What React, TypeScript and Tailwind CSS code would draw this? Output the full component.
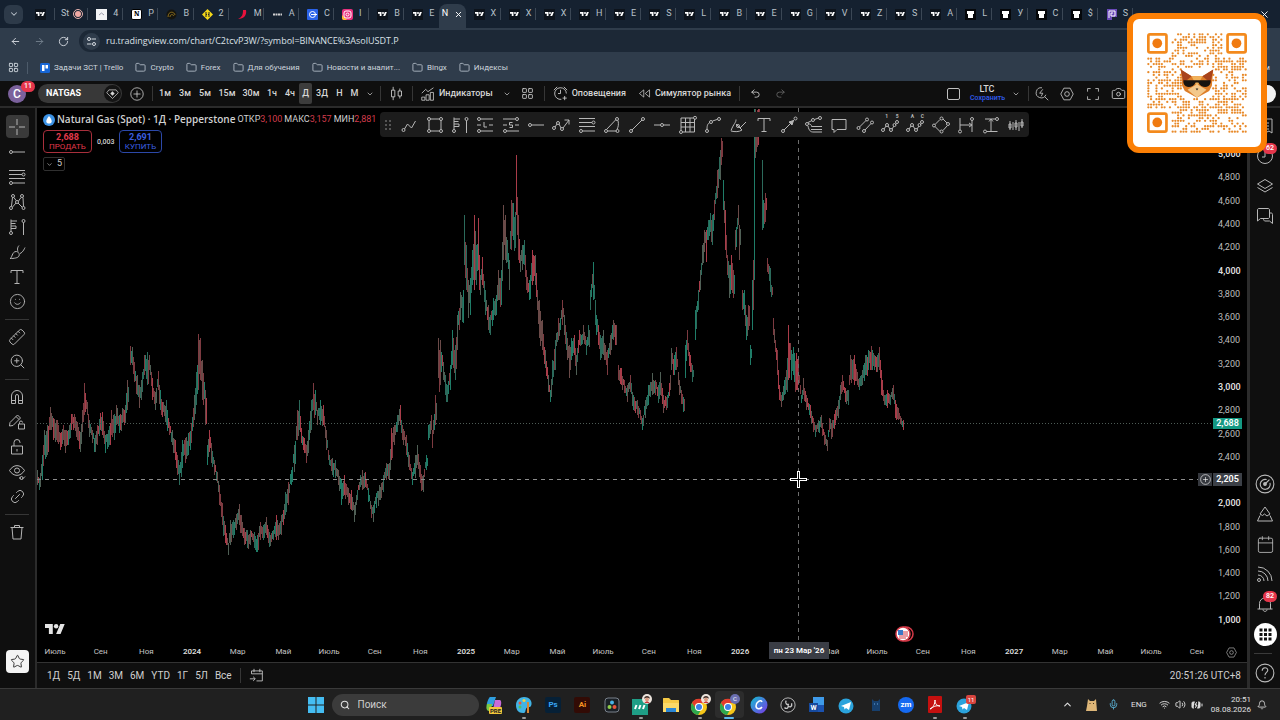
import type { ReactNode } from 'react';
import {
  ArrowLeft, ArrowRight, BatteryCharging, Bell, Calendar, Camera, ChevronDown, ChevronUp,
  Folder, LayoutGrid, Link2, Mic, Redo2, RotateCw, Ruler, Search, Smile, Star,
  Undo2, Volume2, Wifi, X, ZoomIn,
} from 'lucide-react';

/* ---------- chart data: [x, high, low] in canvas pixels ---------- */
const SWINGS: number[][] = [
  [37, 470, 485], [39, 478, 490], [42, 455, 480], [44, 430, 455], [47, 425, 455], [50, 407, 430], [53, 418, 440],
  [57, 420, 442], [60, 433, 450], [63, 425, 440], [65, 430, 453], [68, 430, 445], [71, 414, 430], [74, 414, 428],
  [77, 422, 440], [80, 432, 452], [82, 410, 432], [84, 383, 415], [87, 402, 415], [89, 420, 437], [92, 430, 443],
  [95, 435, 452], [97, 425, 445], [100, 413, 430], [102, 412, 435], [105, 435, 453], [108, 430, 447], [111, 410, 435],
  [114, 414, 440], [116, 405, 425], [119, 415, 433], [122, 408, 423], [125, 405, 423], [127, 380, 410], [130, 346, 365],
  [132, 347, 365], [134, 362, 382], [137, 375, 395], [139, 385, 408], [142, 372, 392], [144, 355, 375], [147, 352, 385],
  [149, 355, 370], [152, 378, 400], [155, 392, 410], [158, 371, 390], [160, 390, 410], [162, 402, 417], [166, 400, 425],
  [169, 422, 435], [172, 430, 445], [175, 440, 460], [177, 455, 475], [179, 465, 485], [182, 440, 468], [185, 438, 463],
  [188, 433, 455], [191, 423, 443], [194, 395, 420], [196, 372, 405], [198, 334, 390], [200, 338, 380], [202, 360, 400],
  [205, 390, 425], [207, 445, 465], [209, 430, 452], [211, 443, 463], [214, 460, 475], [217, 472, 483], [219, 485, 505],
  [222, 503, 525], [225, 525, 543], [228, 543, 555], [230, 520, 545], [233, 520, 538], [236, 514, 530], [239, 504, 525],
  [241, 515, 533], [244, 528, 545], [247, 530, 548], [250, 530, 545], [254, 532, 548], [257, 535, 552], [260, 522, 540],
  [263, 525, 540], [266, 517, 535], [269, 532, 547], [273, 530, 540], [276, 515, 540], [279, 523, 535], [281, 515, 535],
  [283, 510, 525], [285, 492, 515], [288, 482, 505], [291, 470, 485], [294, 445, 472], [297, 410, 440], [299, 400, 430],
  [301, 428, 443], [304, 438, 453], [306, 445, 463], [308, 430, 453], [311, 400, 430], [313, 383, 410], [315, 390, 415],
  [317, 410, 425], [320, 400, 425], [323, 405, 425], [326, 430, 450], [329, 455, 465], [332, 458, 475], [335, 460, 478],
  [338, 470, 485], [341, 480, 505], [344, 475, 495], [348, 488, 505], [351, 490, 510], [354, 505, 522], [357, 490, 500],
  [360, 475, 487], [362, 470, 490], [365, 472, 487], [368, 488, 502], [371, 505, 518], [373, 505, 522], [376, 493, 508],
  [379, 485, 500], [383, 475, 492], [386, 463, 480], [389, 463, 480], [391, 428, 460], [394, 425, 445], [397, 415, 432],
  [400, 405, 425], [402, 425, 440], [406, 435, 455], [409, 455, 470], [412, 472, 485], [415, 455, 478], [417, 445, 465],
  [420, 465, 483], [423, 475, 492], [426, 455, 470], [428, 425, 440], [431, 415, 430], [432, 430, 448], [435, 395, 425],
  [438, 338, 378], [440, 340, 385], [443, 362, 380], [445, 375, 395], [447, 385, 402], [450, 365, 390], [452, 330, 365],
  [455, 345, 380], [457, 315, 350], [460, 292, 320], [463, 290, 323], [464, 215, 265], [466, 245, 290], [468, 280, 318],
  [470, 278, 315], [472, 250, 285], [474, 215, 290], [476, 245, 285], [478, 218, 270], [480, 275, 295], [482, 257, 285],
  [485, 290, 315], [488, 305, 330], [490, 315, 335], [493, 298, 320], [496, 295, 315], [498, 270, 300], [501, 270, 305],
  [503, 205, 260], [505, 215, 260], [507, 240, 262], [509, 260, 290], [511, 200, 250], [513, 203, 240], [515, 212, 248],
  [516, 155, 215], [518, 215, 260], [520, 255, 272], [522, 245, 270], [524, 240, 265], [526, 270, 290], [529, 280, 300],
  [532, 250, 285], [535, 255, 285], [537, 290, 310], [539, 300, 338], [542, 320, 350], [545, 350, 368], [548, 375, 392],
  [550, 390, 402], [552, 360, 385], [555, 340, 370], [558, 318, 340], [560, 318, 330], [562, 300, 325], [564, 315, 335],
  [567, 338, 360], [569, 345, 378], [571, 338, 360], [574, 335, 355], [576, 355, 375], [579, 330, 345], [581, 335, 345],
  [583, 325, 340], [586, 340, 355], [588, 325, 345], [590, 290, 310], [593, 262, 300], [595, 300, 325], [598, 325, 345],
  [600, 335, 360], [603, 330, 355], [605, 345, 360], [607, 350, 375], [610, 335, 355], [613, 320, 340], [615, 325, 345],
  [618, 365, 380], [621, 368, 385], [624, 380, 393], [627, 385, 402], [630, 375, 392], [633, 395, 410], [637, 400, 415],
  [640, 410, 420], [642, 418, 430], [645, 400, 418], [648, 385, 405], [652, 373, 395], [655, 380, 395], [658, 385, 403],
  [660, 372, 395], [663, 395, 413], [667, 395, 408], [670, 375, 390], [671, 348, 370], [674, 355, 375], [676, 347, 370],
  [679, 380, 395], [683, 397, 412], [685, 345, 378], [687, 330, 350], [690, 355, 372], [692, 365, 382], [695, 310, 340],
  [698, 290, 310], [700, 270, 290], [702, 245, 265], [704, 230, 252], [706, 230, 262], [708, 220, 240], [710, 213, 232],
  [712, 215, 245], [714, 200, 220], [717, 170, 198], [720, 150, 180], [721, 138, 165], [723, 180, 210], [725, 210, 250],
  [727, 255, 275], [729, 265, 298], [731, 255, 290], [733, 270, 298], [735, 230, 250], [738, 205, 225], [739, 225, 260],
  [742, 290, 310], [744, 290, 315], [746, 315, 340], [748, 305, 330], [750, 345, 365], [752, 280, 330], [753, 260, 310],
  [754, 109, 280], [755, 109, 158], [758, 109, 145], [762, 160, 230], [763, 200, 228], [765, 193, 222], [767, 258, 272],
  [770, 268, 292], [771, 285, 297], [773, 318, 335], [775, 340, 352], [777, 350, 375], [779, 385, 400], [781, 395, 407],
  [784, 380, 395], [786, 370, 390], [788, 325, 380], [791, 350, 380], [793, 347, 375], [796, 353, 390], [798, 360, 385],
  [801, 395, 403], [803, 378, 395], [806, 395, 410], [810, 405, 418], [813, 418, 432], [815, 425, 437], [818, 420, 432],
  [821, 415, 428], [824, 432, 445], [827, 440, 451], [829, 418, 432], [832, 420, 437], [835, 410, 425], [838, 400, 418],
  [840, 385, 400], [842, 375, 392], [845, 388, 402], [848, 390, 405], [850, 355, 380], [854, 355, 385], [857, 372, 385],
  [859, 378, 390], [862, 370, 385], [865, 355, 375], [868, 350, 370], [871, 346, 370], [874, 355, 370], [877, 355, 372],
  [879, 347, 370], [881, 370, 395], [884, 395, 405], [887, 390, 408], [890, 395, 405], [893, 385, 400], [895, 400, 418],
  [898, 408, 420], [901, 418, 425], [903, 420, 430],
];

function noise(n: number): number {
  const v = Math.sin(n * 12.9898) * 43758.5453;
  return v - Math.floor(v);
}

const UP = ['#1f7d68', '#2b6a5b', '#4f5f55'];
const DOWN = ['#a93c49', '#7d3a40', '#6a4a48'];

const BARS = SWINGS.flatMap(([x, hi, lo], i) => {
  const next = SWINGS[i + 1] ?? [x + 1, hi, lo];
  const steps = Math.max(1, next[0] - x);
  // a jump between two swings is a gap in the series, so no bars lead into it
  const gap = next[1] > lo + 14 || next[2] < hi - 14;
  return Array.from({ length: gap ? Math.min(steps, 2) : steps }, (_, s) => {
    const t = gap ? 0 : s / steps;
    const h = hi + (next[1] - hi) * t;
    const l = lo + (next[2] - lo) * t;
    const seed = x + s;
    const span = l - h;
    const cut = s === 0 ? 0 : span * 0.3;
    const rising = next[1] < hi ? 0.28 : 0.72;
    const up = noise(seed) > rising;
    const shade = Math.floor(noise(seed + 91) * 3);
    return {
      x: seed - 37,
      y: Math.round(h + cut * noise(seed + 7)) - 108,
      h: Math.max(3, Math.round(span - 2 * cut * noise(seed + 3))),
      color: (up ? UP : DOWN)[shade],
    };
  });
});

const PRICES = Array.from({ length: 21 }, (_, i) => 5000 - i * 200);
const MONTHS = ['Июль', 'Сен', 'Ноя', '2024', 'Мар', 'Май', 'Июль', 'Сен', 'Ноя', '2025', 'Мар', 'Май', 'Июль',
  'Сен', 'Ноя', '2026', 'Мар', 'Май', 'Июль', 'Сен', 'Ноя', '2027', 'Мар', 'Май', 'Июль', 'Сен'];

/* ---------- small drawings ---------- */
type Pt = [number, number];

function Glyph({ d, dots = [], size = 18, children }: { d: string; dots?: Pt[]; size?: number; children?: ReactNode }) {
  return (
    <svg width={size} height={size} viewBox="0 0 18 18" fill="none" stroke="currentColor" strokeWidth="1" className="shrink-0">
      <path d={d} />
      {dots.map(([x, y]) => <circle key={`${x}-${y}`} cx={x} cy={y} r="1.5" />)}
      {children}
    </svg>
  );
}

function TvLogo({ className }: { className: string }) {
  return (
    <svg viewBox="0 4 36 18" fill="currentColor" className={className}>
      <path d="M14 22H7V11H0V4h14v18zM28 22h-8l7.500-18h8L28 22z" />
      <circle cx="20" cy="8" r="4" />
    </svg>
  );
}

const Fib = () => <Glyph d="M1 2.500h16M1 6.500h13M1 10.500h16M4.500 15h12.500" dots={[[15.5, 6.5], [3, 15]]} />;
const Ray = () => <Glyph d="M4.500 9h12.500" dots={[[3, 9]]} />;
const TextTool = () => <Glyph d="M3 5V2.500h12V5M9 2.500v13M6.500 15.500h5" />;
const BrushTool = () => <Glyph d="M2 15.500c2 0 2-7 6-7 2 0 4 2 3 4.500-1 2-5 2.500-9 2.500zM10 8.500C8.500 5 11 2.500 11 2.500M12 10.500c3-1 5-6 5-6" />;
const Projection = () => <Glyph d="M3 13.500V1.500M3 3h6M3 5.500h4.500M3 8h5v2.500H3M15.500 4.500V17" dots={[[3, 15], [15.5, 3]]} />;
const Wave = () => <Glyph d="M3 13l2-3M7 10l2 3M11 13l2-3M14 9l1-1" dots={[[2, 14], [6, 9], [10, 14], [13.5, 9], [16, 6]]} />;

const LEFT_TOOLS: { name: string; icon: ReactNode }[][] = [
  [
    { name: 'Курсор', icon: <Glyph d="M9 1v6M9 11v6M1 9h6M11 9h6" /> },
    { name: 'Луч', icon: <Ray /> },
    { name: 'Фибоначчи', icon: <Fib /> },
    { name: 'Паттерны', icon: <Glyph d="M4.500 4.500L3.500 13M6 4.500l2 3M10.500 8L13 4.500M4.500 14l3.500-4M10 10l4 4M15 4.500l.5 9" dots={[[5, 3], [3, 15], [9, 9], [14, 3], [15.5, 15]]} /> },
    { name: 'Прогноз', icon: <Projection /> },
    { name: 'Кисть', icon: <BrushTool /> },
    { name: 'Текст', icon: <TextTool /> },
    { name: 'Значки', icon: <Smile size={17} strokeWidth={1.3} /> },
  ],
  [
    { name: 'Линейка', icon: <Ruler size={18} strokeWidth={1.3} className="-scale-x-100" /> },
    { name: 'Приблизить', icon: <ZoomIn size={17} strokeWidth={1.4} /> },
  ],
  [
    { name: 'Магнит', icon: <Glyph d="M3.500 15.500V8a5.500 5.500 0 0 1 11 0v7.500h-4V8a1.500 1.500 0 0 0-3 0v7.500zM3.500 12.500h4M10.500 12.500h4" /> },
    { name: 'Режим рисования', icon: <Glyph d="M2 9.500L9.500 2l3 3L5 12.500l-3.500.5zM8 3.500l3 3M10.500 11h6v5h-6zM11.500 11V9.500a1.500 1.500 0 0 1 3 0" /> },
    { name: 'Блокировка', icon: <Glyph d="M3.500 8h11v8h-11zM6 8V4.500a3 3 0 0 1 6 0V5M9 11v2.500" /> },
    { name: 'Скрыть', icon: <Glyph d="M1.500 7.500c4-6.500 11-6.500 15 0-4 6.500-11 6.500-15 0zM11 15h2M14 16.500l3-3"><circle cx="9" cy="7.500" r="2.500" /><circle cx="13.500" cy="15" r="1.500" /></Glyph> },
    { name: 'Связать', icon: <Link2 size={17} strokeWidth={1.3} className="-rotate-45" /> },
  ],
  [{ name: 'Удалить', icon: <Glyph d="M2.500 4.500h13M6.500 4.500V2.500h5v2M4 4.500l1 11.500h8l1-11.500" /> }],
];

const FAVORITES: { name: string; icon: ReactNode }[] = [
  { name: 'Ломаная', icon: <Glyph d="M3.500 13l3-5 4 4 4-7" dots={[[2.5, 14]]} /> },
  { name: 'Прямоугольник', icon: <Glyph d="M3 4.500v9M15 4.500v9M4.500 3h9M4.500 15h9" dots={[[3, 3], [15, 3], [3, 15], [15, 15]]} /> },
  { name: 'Профиль объёма', icon: <Projection /> },
  { name: 'Длинная позиция', icon: <Glyph d="M4.500 3h12.500M1 9h4M13 9h4M4.500 15h12.500M8 6v5h3" dots={[[3, 3], [3, 15]]} /> },
  { name: 'Короткая позиция', icon: <Glyph d="M1 3h12.500M1 9h4M13 9h4M4.500 15h12.500M10.500 6.500h-3V9h3v2.500h-3" dots={[[15, 3], [3, 15]]} /> },
  { name: 'Горизонтальный луч', icon: <Ray /> },
  { name: 'Путь', icon: <Glyph d="M3 11l2-3M7 8l2 4M11 12l6-8M12.500 4H17v4.500" dots={[[2, 12], [6, 7], [10, 13]]} /> },
  { name: 'Коррекция', icon: <Fib /> },
  { name: 'Дуга', icon: <Glyph d="M3.500 13.500L13 3.500M4.500 15h9M15 4.500c1 4 0 7-1 9" dots={[[3, 15], [14, 3], [14.5, 15]]} /> },
  { name: 'Линия тренда', icon: <Glyph d="M4 14L14 4" dots={[[3, 15], [15, 3]]} /> },
  { name: 'Горизонтальная линия', icon: <Glyph d="M1 9h6.500M10.500 9h6.500" dots={[[9, 9]]} /> },
  { name: 'Сетка', icon: <Glyph d="M2 2h12.500M15.500 3v13H3.500M2 2v12.500M6.500 2v14M11 2v14M2 6.500h13.500M2 11h13.500" dots={[[16, 1.8], [2, 16]]} /> },
  { name: 'Кривая', icon: <Glyph d="M3 13.500c0-5 1-6 3-7M8.500 5L13 3.500" dots={[[3, 15], [7, 6], [15, 3]]} /> },
  { name: 'Кисть', icon: <Glyph d="M2 14.500C5 7 7 7 7 3.500M7 8l6 6c-3 2-7 2-11 1M17 6l-6 6" dots={[[9, 10]]} /> },
  { name: 'Текст', icon: <TextTool /> },
  { name: 'Стрелка', icon: <Glyph d="M4 14L14 4" dots={[[3, 15], [15.5, 2.5]]}><path d="M13.500 4.500L9 6l3 3z" fill="currentColor" /></Glyph> },
  { name: 'Веер', icon: <Glyph d="M3 6.500l4-2M9.500 3.500L13.500 2M3.500 7.500c2 1 3 1 3 3h10.500M6 13.500h11M3 10c1 5 3 6 5 6h9" dots={[[2, 8], [8, 4], [15, 2]]} /> },
  { name: 'Заметка', icon: <Glyph d="M2 3.500h14v10H7l-3 3v-3H2z" /> },
  { name: 'Канал', icon: <Glyph d="M3.500 11L10 4.500M9 14l6-6.500" dots={[[2.5, 12], [11, 3.5], [8, 15], [16, 6.5]]} /> },
  { name: 'Волны 12345', icon: <Wave /> },
  { name: 'Волны ABC', icon: <Wave /> },
  { name: 'Повёрнутый прямоугольник', icon: <Glyph d="M3 8.500l5-5M11 3l4 4M15 10l-4 4.500M8 15.500l-5-5" dots={[[9.5, 2.5], [16, 8], [9.5, 15.5], [2, 9.5]]} /> },
  { name: 'Диапазон дат', icon: <Glyph d="M3 2v12M15 4.500V16M3 9h12M12 7l3 2-3 2" dots={[[3, 15.5], [15, 3]]} /> },
  { name: 'Диапазон цен', icon: <Glyph d="M3 3h10.500M4.500 15.500h11M9 3v12M7 5.500L9 3l2 2.500" dots={[[15, 3], [3, 15.5]]} /> },
  { name: 'Бары', icon: <Glyph d="M3 5v9M6 6v8M9 4v10M12 6v9M15 3v9M2 8h2v4H2zM8 7h2v4H8zM14 6h2v4h-2z" /> },
];

const TABS: [string, string][] = [
  ['white', '4'], ['notion', 'P'], ['gold', 'В'], ['bnb', '2'], ['chili', 'М'], ['dots', 'А'], ['blue', 'С'], ['insta', 'I'],
  ['tv', 'В'], ['tv', 'Е'], ['active', 'N'], ['tv', 'X'], ['tv', 'X'], ['tv', 'X'], ['tv', 'H'], ['tv', 'E'], ['tv', 'S'],
  ['tv', 'L'], ['tv', 'B'], ['tv', 'E'], ['tv', 'G'], ['tv', 'V'], ['tv', 'Z'], ['tv', 'S'], ['tv', 'A'], ['shirt', 'L'],
  ['shirt', 'У'], ['shirt', 'С'], ['shirt', '$'], ['purple', 'S'],
];

function Favicon({ kind }: { kind: string }) {
  switch (kind) {
    case 'tv':
      return <span className="flex size-[11px] items-center justify-center bg-[#0d131b] text-white"><TvLogo className="w-[9px]" /></span>;
    case 'white':
      return <svg className="size-[11px]" viewBox="0 0 11 11"><path d="M0 0h11v11H0z" fill="#f2f4f6" /><path d="M3 6l2.500-2L8 6" stroke="#99a" fill="none" /></svg>;
    case 'notion':
      return <span className="flex size-[11px] items-center justify-center rounded-xs border border-black bg-white font-serif text-[8px] font-bold text-black">N</span>;
    case 'gold':
      return <svg className="size-[11px]" viewBox="0 0 11 11"><circle cx="5.500" cy="5.500" r="5" fill="#14140f" /><path d="M2 8c0-6 6-6 7-2M4 8c0-3 3-3 4-1" stroke="#8a6d1d" fill="none" /></svg>;
    case 'bnb':
      return <svg className="size-[11px]" viewBox="0 0 11 11"><path d="M5.500 0L11 5.500 5.500 11 0 5.500z" fill="#f4d818" /><path d="M4 3v5M4 5.500h1M7 3v5M6 5.500h1" stroke="#222" /></svg>;
    case 'chili':
      return <svg className="size-[11px]" viewBox="0 0 11 11"><path d="M6 1h3c1 5-2 9-8 9 4-2 5-4 5-9z" fill="#e8123c" /></svg>;
    case 'dots':
      return <svg className="size-[11px]" viewBox="0 0 11 11"><path d="M1 5.500h9" stroke="#d0d0d0" strokeWidth="2" strokeDasharray="2 .5" /></svg>;
    case 'blue':
      return <svg className="size-[11px]" viewBox="0 0 11 11"><rect width="11" height="11" rx="1" fill="#2a62e8" /><circle cx="5.500" cy="5.500" r="3" stroke="#fff" fill="none" /><path d="M4 5.500h6" stroke="#fff" /></svg>;
    case 'insta':
      return <svg className="size-[11px]" viewBox="0 0 11 11"><rect width="11" height="11" rx="2" fill="#e8307e" /><path d="M0 6l5 5H2a2 2 0 0 1-2-2z" fill="#fb3" /><rect x="2" y="2" width="7" height="7" rx="2" stroke="#fff" fill="none" /><circle cx="5.500" cy="5.500" r="1.500" stroke="#fff" fill="none" /></svg>;
    case 'shirt':
      return <svg className="size-[11px]" viewBox="0 0 11 11"><path d="M0 0h11v11H0z" fill="#05070a" /><path d="M2 2h7v3L8 5v4H3V5L2 5z" fill="#fff" /></svg>;
    default:
      return <svg className="size-[11px]" viewBox="0 0 11 11"><path d="M1 0h10v8H6v3H1z" fill="#6a4ab8" /><path d="M3 9V2h6v5H5V4h2" stroke="#fff" fill="none" /></svg>;
  }
}

function BrowserTabs() {
  return (
    <div className="flex h-7 items-center bg-[#152130] text-[9px] text-[#b9c1ca]">
      <button aria-label="Поиск вкладок" className="ml-1 flex size-[19px] shrink-0 items-center justify-center rounded-md bg-[#2d3a49]"><ChevronDown size={10} strokeWidth={2.5} /></button>
      <div className="flex h-3 w-8 shrink-0 items-center border-r border-[#3b4755] pl-3"><Favicon kind="tv" /></div>
      <div className="flex h-3 min-w-0 flex-1 items-center gap-1 border-r border-[#3b4755] pl-1.5">
        <span className="w-2">St</span>
        <span className="flex size-[10px] shrink-0 items-center justify-center rounded-full border border-[#e8b4b0]"><span className="size-1.5 rounded-full bg-[#f0a9a4]" /></span>
      </div>
      {TABS.map(([kind, label], i) => kind === 'active' ? (
        <div key={i} className="flex h-full min-w-0 flex-1 items-end">
          <div className="flex h-6 flex-1 items-center justify-center gap-1.5 rounded-t-lg bg-[#2f3c4b] pb-1 text-white">
            <span>{label}</span><X size={9} strokeWidth={2.5} />
          </div>
        </div>
      ) : (
        <div key={i} className={`flex h-3 min-w-0 flex-1 items-center gap-1.5 border-r pl-2 ${TABS[i + 1]?.[0] === 'active' ? 'border-transparent' : 'border-[#3b4755]'}`}>
          <Favicon kind={kind} />
          <span>{label}</span>
        </div>
      ))}
      <div className="flex w-[147px] shrink-0 items-center justify-end pr-2.5 text-white"><X size={11} /></div>
    </div>
  );
}

function Bookmark({ children }: { children: string }) {
  return (
    <a href="#" className="flex shrink-0 items-center gap-1">
      <Folder size={11} strokeWidth={2} className="text-[#aeb8c3]" />
      {children}
    </a>
  );
}

function BrowserBars() {
  return (
    <>
      <div className="flex h-[26px] items-center bg-[#2f3c4b] text-[#d5dae0]">
        <div className="flex w-[79px] justify-between px-2.5">
          <button aria-label="Назад"><ArrowLeft size={11} /></button>
          <button aria-label="Вперёд" className="text-[#73808d]"><ArrowRight size={11} /></button>
          <button aria-label="Обновить"><RotateCw size={11} /></button>
        </div>
        <div className="mr-24 flex h-[22px] flex-1 items-center gap-1.5 rounded-full bg-[#1c2836] pl-1">
          <button aria-label="Сведения о сайте" className="flex size-[17px] items-center justify-center rounded-full bg-[#2f3c4b]">
            <svg width="9" height="9" viewBox="0 0 9 9" fill="none" stroke="currentColor"><circle cx="2" cy="2" r="1.500" /><circle cx="7" cy="7" r="1.500" /><path d="M4.500 2H9M0 7h4.500" /></svg>
          </button>
          <input aria-label="Адрес" defaultValue="ru.tradingview.com/chart/C2tcvP3W/?symbol=BINANCE%3AsolUSDT.P" className="flex-1 bg-transparent font-['Open_Sans',sans-serif] text-[9px] text-[#dbe0e6] outline-none" />
        </div>
      </div>
      <div className="flex h-[27px] items-center gap-3 bg-[#2f3c4b] pl-2 pr-2.5 text-[8px] text-[#cdd4db]">
        <div className="flex items-center gap-2">
          <LayoutGrid size={11} />
          <span className="h-3 w-px bg-[#4d5b6a]" />
        </div>
        <a href="#" className="flex items-center gap-1">
          <svg width="10" height="10" viewBox="0 0 10 10"><rect width="10" height="10" rx="1.500" fill="#1766d6" /><path d="M2 2h2.500v6H2zM5.500 2H8v3.500H5.500z" fill="#fff" /></svg>
          Задачи ЗСТ | Trello
        </a>
        <Bookmark>Crypto</Bookmark>
        <Bookmark>Forex</Bookmark>
        <Bookmark>Для обучения</Bookmark>
        <Bookmark>Новости и аналит...</Bookmark>
        <Bookmark>Bingx</Bookmark>
        <Bookmark>Индексы</Bookmark>
        <span className="ml-auto">м</span>
      </div>
    </>
  );
}

const Divider = () => <span className="h-[15px] w-px shrink-0 bg-[#363636]" />;

function ChartHeader() {
  return (
    <header className="flex h-[27px] shrink-0 items-center border-b-2 border-[#2b2b2b] bg-[#0f0f0f] text-[9px] font-medium text-[#d6d6d6]">
      <div className="relative ml-2 flex size-[18px] shrink-0 items-center justify-center rounded-full bg-[#7b619c] text-[12px] text-white">
        С
        <span className="absolute -top-1 left-[13px] flex h-[11px] items-center rounded-full bg-[#e5364b] px-[3px] text-[7px] leading-none">11</span>
      </div>
      <div className="ml-3 flex h-[19px] w-[84px] shrink-0 items-center justify-between rounded-full bg-[#383838] pl-2 pr-px">
        <span className="font-bold text-white">NATGAS</span>
        <button aria-label="Детали" className="flex size-[17px] items-center justify-center rounded-full bg-[#141414]">
          <Glyph size={13} d="M4 4h10l3 4-8 8-8-8z"><path d="M9 6l3 3-3 3-3-3z" fill="currentColor" stroke="none" /></Glyph>
        </button>
      </div>
      <button aria-label="Сравнить" className="mx-2 flex shrink-0"><Glyph size={14} d="M9 4.500v9M4.500 9h9"><circle cx="9" cy="9" r="8" /></Glyph></button>
      <Divider />
      <div className="ml-0.5 flex shrink-0 items-center">
        {['1м', '3м', '5м'].map((t) => <button key={t} className="w-5">{t}</button>)}
        {['15м', '30м'].map((t) => <button key={t} className="w-6">{t}</button>)}
        {['1ч', '4ч'].map((t) => <button key={t} className="w-[18px]">{t}</button>)}
        <button className="h-[21px] w-[13px] rounded-xs bg-[#3c3c3c]">Д</button>
        <button className="w-5">3Д</button>
        {['Н', 'М'].map((t) => <button key={t} className="w-[15px]">{t}</button>)}
      </div>
      <button aria-label="Интервалы" className="ml-1 mr-1.5 shrink-0"><ChevronDown size={8} /></button>
      <Divider />
      <button aria-label="Свечи" className="mx-2 flex shrink-0"><Glyph size={15} d="M3 5h4v8H3zM5 1v4M5 13v4M11 6h4v6h-4zM13 3v3M13 12v3" /></button>
      <Divider />
      <button className="ml-2 flex shrink-0 items-center gap-1">
        <Glyph size={14} d="M1 8l5-5 3 3 7-5M1 17v-4h4v4zM6.500 17v-7h4v7zM12 17V7h4v10z" />
        Индикаторы
      </button>
      <button aria-label="Шаблоны" className="ml-2.5 shrink-0"><ChevronDown size={8} /></button>
      <button aria-label="Макеты" className="mx-2.5 flex shrink-0"><LayoutGrid size={13} strokeWidth={1.5} /></button>
      <Divider />
      <button className="ml-2 flex shrink-0 items-center gap-1">
        <Glyph size={15} d="M9 4.500V9H6M1 5l4-4M13 1l4 4M14 12v5M11.500 14.500h5"><path d="M10 16A7 7 0 1 1 16 9" /></Glyph>
        Оповещения
      </button>
      <button className="ml-3 flex shrink-0 items-center gap-1">
        <Glyph size={13} d="M8 4L2 9l6 5zM16 4l-6 5 6 5z" />
        Симулятор рынка
      </button>
      <span className="ml-2 flex shrink-0"><Divider /></span>
      <button aria-label="Отменить" className="ml-2.5 shrink-0"><Undo2 size={11} strokeWidth={1.8} /></button>
      <button aria-label="Повторить" className="ml-3.5 shrink-0 text-[#6a6a6a]"><Redo2 size={11} strokeWidth={1.8} /></button>
      <div className="ml-auto flex shrink-0 items-center">
        <span className="h-3 w-[13px] shrink-0 rounded-xs border border-[#c0c0c0]" />
        <button className="ml-2.5 w-[34px] text-center leading-[9px]">
          LTC
          <span className="block text-[7px] leading-[8px] text-[#2f5cf0]">Сохранить</span>
        </button>
        <button aria-label="Сохранения" className="mx-2"><ChevronDown size={8} /></button>
        <Divider />
        <div className="flex w-[103px] justify-around">
          <button aria-label="Быстрый поиск"><Glyph size={14} d="M9 1a6.500 6.500 0 1 0 5 9M12.500 12.500L17 17M10 3L6 8h4l-2 4" /></button>
          <button aria-label="Настройки"><Glyph size={14} d="M5 1.500h8L17 9l-4 7.500H5L1 9z"><circle cx="9" cy="9" r="3" /></Glyph></button>
          <button aria-label="Во весь экран"><Glyph size={14} d="M2 6V2h4M12 2h4v4M16 12v4h-4M6 16H2v-4" /></button>
          <button aria-label="Снимок"><Camera size={15} strokeWidth={1.3} /></button>
        </div>
        <button className="ml-[126px] mr-1 size-[18px] rounded-full bg-[#f1f1f1]" aria-label="Опубликовать" />
      </div>
    </header>
  );
}

function LeftTools() {
  return (
    <aside className="flex w-[37px] shrink-0 flex-col border-r-2 border-[#2b2b2b] bg-[#0f0f0f] pr-px pt-[6px] text-[#b4b4b4]">
      {LEFT_TOOLS.map((group, g) => (
        <div key={g}>
          {g > 0 && <div className="flex h-[10px] items-center px-[5px]"><span className="h-px flex-1 bg-[#363636]" /></div>}
          {group.map((tool, i) => (
            <div key={tool.name} className="flex h-[25px] items-center justify-center">
              <button aria-label={tool.name} className={`flex size-[23px] items-center justify-center rounded-sm ${g === 0 && i === 0 ? 'bg-[#3a3a3a]' : ''}`}>{tool.icon}</button>
            </div>
          ))}
        </div>
      ))}
      <button aria-label="Избранное" className="mb-[15px] ml-1.5 mt-auto flex size-[23px] items-center justify-center rounded-sm bg-[#f4f4f4] text-[#222]"><Star size={15} strokeWidth={1.4} /></button>
    </aside>
  );
}

function PlotCanvas() {
  return (
    <svg viewBox="0 0 1178 534" preserveAspectRatio="none" className="block size-full" shapeRendering="crispEdges">
      {BARS.map((b) => <rect key={`${b.x}-${b.y}`} x={b.x} y={b.y} width="1" height={b.h} fill={b.color} />)}
      {/* last price, then the cursor lines */}
      <path d="M0 315.500h1178" stroke="#4d5b55" strokeDasharray="1 2" />
      <path d="M0 371.500h1162" stroke="#8c8c8c" strokeDasharray="4 4" />
      <path d="M761.500 0v534" stroke="#6e6e6e" strokeDasharray="4 4" />
      <path d="M760.500 363.500h2v7h7v2h-7v7h-2v-7h-7v-2h7z" fill="#000" stroke="#fff" />
    </svg>
  );
}

function Legend() {
  return (
    <div className="absolute left-1.5 top-[5px] text-[9px] text-[#d0d0d0]">
      <div className="flex h-[13px] items-center whitespace-nowrap">
        <svg width="12" height="12" viewBox="0 0 12 12" className="shrink-0"><circle cx="6" cy="6" r="6" fill="#3c93e6" /><path d="M6 2c5 6 2 7.500 0 7.500S1 8 6 2z" fill="#fff" /></svg>
        <span className="ml-0.5 font-['Open_Sans',sans-serif] text-[10px] font-semibold">Natural Gas (Spot) · 1Д · Pepperstone</span>
        <span className="ml-0.5">ОТКР<span className="text-[#d23c4c]">3,100</span></span>
        <span className="ml-0.5">МАКС<span className="text-[#d23c4c]">3,157</span></span>
        <span className="ml-0.5">МИН<span className="text-[#d23c4c]">2,881</span></span>
      </div>
      <div className="mt-1 flex items-center gap-[5px] text-center text-[8px] leading-[10px]">
        <button className="h-[23px] w-[49px] rounded-sm border border-[#a82f3c] text-[#e0394b]"><b className="block text-[9px] leading-[10px]">2,688</b>ПРОДАТЬ</button>
        <span className="w-[17px] text-[7px] font-medium">0,003</span>
        <button className="h-[23px] w-[43px] rounded-sm border border-[#2c48a8] text-[#3a5fe0]"><b className="block text-[9px] leading-[10px]">2,691</b>КУПИТЬ</button>
      </div>
      <button className="mt-1 flex h-[14px] w-[22px] items-center justify-center gap-1 rounded-xs border border-[#303030]"><ChevronDown size={7} />5</button>
    </div>
  );
}

function ChartArea() {
  return (
    <main className="relative flex min-w-0 flex-1 flex-col bg-black">
      <div className="flex min-h-0 flex-1">
        <div className="relative min-w-0 flex-1">
          <div className="absolute inset-0"><PlotCanvas /></div>
          <Legend />
          <TvLogo className="absolute bottom-2 left-2 w-5 text-[#e4e4e4]" />
          <svg width="20" height="16" viewBox="0 0 20 16" className="absolute bottom-0 left-[858px]">
            <circle cx="11" cy="8" r="7" fill="none" stroke="#d63a48" strokeWidth="1.500" />
            <circle cx="8" cy="8" r="7" fill="#fff" stroke="#d63a48" strokeWidth="1.500" />
            <path d="M4 10h9M4 12h7M8 6h5M8 8h5" stroke="#d63a48" />
            <path d="M3 4h5v5H3z" fill="#3a78c8" />
          </svg>
        </div>
        <div className="flex w-8 shrink-0 flex-col pb-2.5 pl-[3px] pt-[35px] text-[9px] text-[#bdbdbd]">
          {PRICES.map((p) => (
            <span key={p} className={`flex flex-1 items-center leading-none ${p % 1000 === 0 ? 'font-semibold text-[#dcdcdc]' : ''}`}>
              {`${Math.floor(p / 1000)},${String(p % 1000).padStart(3, '0')}`}
            </span>
          ))}
        </div>
      </div>
      {/* price tags */}
      <div className="absolute right-[5px] top-[310px] flex h-[11px] w-[29px] items-center justify-center bg-[#149983] text-[9px] font-semibold text-white">2,688</div>
      <div className="absolute right-[5px] top-[365px] flex h-[13px] text-[9px] font-semibold text-white">
        <button aria-label="Добавить" className="flex w-[14px] items-center justify-center bg-[#35383e]"><Glyph size={11} d="M9 5v8M5 9h8"><circle cx="9" cy="9" r="8" /></Glyph></button>
        <span className="ml-px flex w-[29px] items-center justify-center bg-[#3c4047]">2,205</span>
      </div>
      <div className="relative flex h-[21px] shrink-0 items-center border-b border-[#333] text-[8px] text-[#c4c4c4]">
        <div className="flex min-w-0 flex-1 justify-between">
          {MONTHS.map((m, i) => <span key={i} className={`w-9 text-center ${m.startsWith('20') ? 'font-semibold text-[#dcdcdc]' : ''}`}>{m}</span>)}
        </div>
        <button aria-label="Настройки шкалы" className="flex w-8 justify-center"><Glyph size={11} d="M5 1.500h8L17 9l-4 7.500H5L1 9z"><circle cx="9" cy="9" r="3" /></Glyph></button>
        <span className="absolute left-[732px] top-0 flex h-[17px] w-[60px] items-center justify-center bg-[#3a3d45] font-semibold text-white">пн 23 Мар '26</span>
      </div>
      <div className="flex h-[25px] shrink-0 items-center gap-2 bg-[#0f0f0f] pl-2.5 pr-1.5 text-[10px] text-[#d0d0d0]">
        <div className="flex gap-[7px]">
          {['1Д', '5Д', '1М', '3М', '6М', 'YTD', '1Г', '5Л', 'Все'].map((r) => <button key={r}>{r}</button>)}
        </div>
        <Divider />
        <button aria-label="Перейти к дате"><Glyph size={15} d="M3 7V3.500h13v12H9M3 7h13M6 1v4M13 1v4M1 13h6M5 10.500L7.500 13 5 15.500" /></button>
        <span className="ml-auto">20:51:26 UTC+8</span>
      </div>
      {/* favourite tools */}
      <div className="absolute left-[343px] right-[218px] top-1 flex h-[25px] items-center rounded-sm bg-[#1c1c1c] text-[#b8b8b8]">
        <svg width="17" height="10" viewBox="0 0 17 10" fill="#555" className="shrink-0"><path d="M5 0h2v2H5zM9 0h2v2H9zM5 4h2v2H5zM9 4h2v2H9zM5 8h2v2H5zM9 8h2v2H9z" /></svg>
        {FAVORITES.map((f) => (
          <button key={f.name} aria-label={f.name} className="relative flex min-w-0 flex-1 justify-center">
            {f.icon}
            {f.name.startsWith('Волны') && <span className="absolute -top-0.5 left-2 text-[5px] font-bold leading-none">{f.name.endsWith('ABC') ? 'A' : '1'}</span>}
            {f.name.startsWith('Волны') && <span className="absolute -top-0.5 right-1 text-[5px] font-bold leading-none">{f.name.endsWith('ABC') ? 'C' : '5'}</span>}
          </button>
        ))}
      </div>
    </main>
  );
}

function SideButton({ name, badge, children }: { name: string; badge?: string; children: ReactNode }) {
  return (
    <button aria-label={name} className="relative flex h-[30px] w-full shrink-0 items-center justify-center">
      {children}
      {badge && <span className="absolute left-[13px] top-0.5 flex h-[11px] items-center rounded-full bg-[#e5364b] px-[3px] text-[7px] font-semibold leading-none text-white">{badge}</span>}
    </button>
  );
}

function RightTools() {
  return (
    <aside className="flex w-[33px] shrink-0 flex-col border-l-[3px] border-[#2b2b2b] bg-[#0f0f0f] pt-[3px] text-[#b8b8b8]">
      <SideButton name="Список котировок"><Glyph d="M2 2h14v14l-3-2-4 2-4-2-3 2zM5 6h8M5 9h8M5 12h8" /></SideButton>
      <SideButton name="Оповещения" badge="62"><Glyph d="M9 4v6H6"><circle cx="9" cy="9" r="7.500" /></Glyph></SideButton>
      <SideButton name="Слои"><Glyph d="M9 2.500l7.500 4.500L9 11.500 1.500 7zM1.500 10.500L9 15l7.500-4.500" /></SideButton>
      <SideButton name="Чаты"><Glyph d="M3 1.500h9c1 0 1.500.5 1.500 1.500v7c0 1-.5 1.500-1.500 1.500H4.500L1.500 14V3c0-1 .5-1.500 1.500-1.500zM13.500 6H15c1 0 1.500.5 1.500 1.500v9l-3-2.500H9c-1 0-1.500-1-1.500-2.500" /></SideButton>
      <span className="flex-1" />
      <SideButton name="Скринеры"><Glyph size={20} d="M9 9l4-4"><circle cx="9" cy="9" r="8" /><path d="M13.500 8a4.500 4.500 0 1 1-3-3" /><circle cx="9" cy="9" r="1.200" fill="currentColor" /></Glyph></SideButton>
      <SideButton name="Идеи"><Glyph d="M9 2l5 7-3 2-2.500-2-2 1.500L4 9zM4 10.500L1.500 16h15L14 10.500" /></SideButton>
      <SideButton name="Календарь"><Calendar size={19} strokeWidth={1.1} /></SideButton>
      <SideButton name="Новости"><Glyph d="M2 2a14 14 0 0 1 14 14M2 6a10 10 0 0 1 10 10M2 10a6 6 0 0 1 6 6" dots={[[3, 15]]} /></SideButton>
      <SideButton name="Уведомления" badge="82"><Glyph d="M3.500 14V8.500a5.500 5.500 0 0 1 11 0V14M1.500 14h15M7 14.500c0 2.500 4 2.500 4 0" /></SideButton>
      <SideButton name="Приложения">
        <svg width="23" height="23" viewBox="0 0 23 23"><circle cx="11.500" cy="11.500" r="11.500" fill="#fff" /><path d="M7 5.500v12M11.500 5.500v12M16 5.500v12" stroke="#111" strokeWidth="3" strokeDasharray="3 1.500" /></svg>
      </SideButton>
      <span className="my-1 ml-1 mr-2 h-px shrink-0 bg-[#3a3a3a]" />
      <SideButton name="Помощь"><Glyph size={20} d="M6.500 7c0-3.500 5-3.500 5-.5 0 2-2.500 2-2.500 4.500M9 12.500V14"><circle cx="9" cy="9" r="8" /></Glyph></SideButton>
    </aside>
  );
}

/* ---------- taskbar ---------- */
function Chrome({ badge }: { badge: ReactNode }) {
  return (
    <svg width="22" height="22" viewBox="0 0 22 22">
      <circle cx="10" cy="13" r="8" fill="#f5c518" />
      <path d="M3 9a8 8 0 0 1 14 0h-7a4 4 0 0 0-4 5z" fill="#e33b2e" />
      <path d="M3 9l4 6c1 2 3 2 5 1l-3 5A8 8 0 0 1 3 9z" fill="#2da94f" />
      <circle cx="10" cy="13" r="4" fill="#fff" /><circle cx="10" cy="13" r="3" fill="#3d7fe8" />
      {badge}
    </svg>
  );
}

const Face = () => <g><circle cx="17" cy="5" r="5" fill="#ece4dd" /><path d="M14 5c0-4 6-4 6 0l-1-1h-4z" fill="#41312b" /><circle cx="17" cy="5.500" r="2" fill="#d79a80" /><path d="M14.500 9c1-2 4-2 5 0z" fill="#c33" /></g>;

function Plane({ badge }: { badge?: boolean }) {
  return (
    <svg width="22" height="22" viewBox="0 0 22 22">
      <circle cx="10" cy="12" r="7.500" fill="#2ba3dc" /><path d="M5 12l10-4-2 8-3-2-1.500 1.500L8 13z" fill="#fff" />
      {badge && <rect x="12" y="1" width="10" height="9" rx="2" fill="#d8453f" />}
      {badge && <text x="17" y="8" textAnchor="middle" fontSize="6" fill="#fff">11</text>}
    </svg>
  );
}

function AppTile({ text, className }: { text: string; className: string }) {
  return <span className={`flex size-4 items-center justify-center text-[8px] font-bold ${className}`}>{text}</span>;
}

const APPS: { name: string; icon: ReactNode; open?: boolean }[] = [
  { name: 'Copilot', icon: <svg width="18" height="20" viewBox="0 0 18 20"><path d="M5 2h6l-3 9H2C1 9 4 2 5 2z" fill="#2f9fe0" /><path d="M2 9h5l-1 7H4c-3 0-3-4-2-7z" fill="#7ac943" /><path d="M10 5h5c3 1 0 11-3 11H6c3-1 3-8 4-11z" fill="#c86bd8" /><rect x="4" y="12" width="13" height="7" rx="1" fill="#f4c63a" /><text x="10.500" y="18" textAnchor="middle" fontSize="6" fontWeight="700" fill="#222">PRE</text></svg> },
  { name: 'Paint', open: true, icon: <svg width="18" height="18" viewBox="0 0 18 18"><path d="M9 1c6 0 9 5 7 9-1 2-4 0-5 3-1 2 0 4-3 4C2 17 1 12 1 9c0-5 4-8 8-8z" fill="#41b4e6" /><circle cx="5" cy="7" r="1.500" fill="#e9543d" /><circle cx="9" cy="4.500" r="1.500" fill="#f5d03a" /><circle cx="5" cy="11" r="1.500" fill="#57c05a" /><path d="M13 6v11" stroke="#d88735" strokeWidth="2" /></svg> },
  { name: 'Photoshop', icon: <AppTile text="Ps" className="rounded-xs bg-[#062036] text-[#38a5f5]" /> },
  { name: 'Illustrator', icon: <AppTile text="Ai" className="rounded-xs bg-[#320b05] text-[#f79422]" /> },
  { name: 'DaVinci', icon: <svg width="16" height="16" viewBox="0 0 16 16"><rect x="1" y="1" width="14" height="14" rx="3" fill="#1b2127" stroke="#78808a" /><circle cx="8" cy="5.500" r="2" fill="#49b4e8" /><circle cx="5.500" cy="10" r="2" fill="#8fce4a" /><circle cx="10.500" cy="10" r="2" fill="#e9543d" /></svg> },
  { name: 'Miro', open: true, icon: <svg width="22" height="22" viewBox="0 0 22 22"><path d="M2 5h16v16H2z" fill="#1f9e86" /><path d="M5 15l1.500-4M9 15l1.500-4M13 15l1.500-4" stroke="#fff" strokeWidth="2" /><Face /></svg> },
  { name: 'Проводник', icon: <svg width="18" height="18" viewBox="0 0 18 18"><path d="M1 3c0-1 0-1 1-1h5l2 2h7c1 0 1 0 1 1v11H1z" fill="#f6c945" /><path d="M1 7h16v9H1z" fill="#fbd968" /><path d="M4 12h10v4H4z" fill="#2b87d6" /></svg> },
  { name: 'Chrome 1', open: true, icon: <Chrome badge={<Face />} /> },
  { name: 'Chrome 2', open: true, icon: <Chrome badge={<><circle cx="17" cy="5" r="5" fill="#6b6fb0" /><text x="17" y="7" textAnchor="middle" fontSize="6" fill="#fff">С</text></>} /> },
  { name: 'Canva', icon: <svg width="18" height="18" viewBox="0 0 18 18"><defs><linearGradient id="cv" x1="0" y1="0" x2="1" y2="1"><stop stopColor="#12c0cf" /><stop offset="1" stopColor="#7c35e8" /></linearGradient></defs><circle cx="9" cy="9" r="8.500" fill="url(#cv)" /><path d="M12 6c-1-3-6 0-6 4 0 3 4 4 6 1" stroke="#fff" strokeWidth="1.500" fill="none" /></svg> },
  { name: 'OBS', icon: <svg width="16" height="16" viewBox="0 0 18 18" fill="none" stroke="#c9c9c9"><circle cx="9" cy="9" r="8" fill="#1c1c1e" /><path d="M7 4c-2 3 1 5 3 4M13 7c1 4-2 5-4 3M5 12c3 2 5 0 4-3" strokeWidth="1.500" /></svg> },
  { name: 'Word', icon: <svg width="17" height="17" viewBox="0 0 17 17"><path d="M4 1h11v15H4z" fill="#3f9bea" /><path d="M4 9h11v7H4z" fill="#1b52b0" /><path d="M0 7h9v9H0z" fill="#164a9e" /><text x="4.500" y="14" textAnchor="middle" fontSize="7" fontWeight="700" fill="#fff">W</text></svg> },
  { name: 'Telegram', icon: <Plane /> },
  { name: 'Кот', icon: <svg width="12" height="16" viewBox="0 0 12 16"><path d="M2 2l2 2h4l2-2v12H2z" fill="#17406e" /><path d="M4 7h1M7 7h1" stroke="#6ba5dd" /></svg> },
  { name: 'Zoom', icon: <AppTile text="zm" className="rounded-full bg-[#1569f0] text-white" /> },
  { name: 'Acrobat', open: true, icon: <svg width="16" height="18" viewBox="0 0 16 18"><rect x="1" width="14" height="17" rx="1" fill="#c5100f" /><path d="M3 13c3-1 5-5 5-9 0 4 2 6 5 6-4-1-7 1-10 3z" stroke="#fff" fill="none" /></svg> },
  { name: 'Telegram 2', open: true, icon: <Plane badge /> },
];

function Taskbar() {
  return (
    <footer className="grid h-8 shrink-0 grid-cols-[1fr_auto_1fr] items-center border-t border-[#3a3a3a] bg-[#202020] text-[#e0e0e0]">
      <span />
      <div className="flex h-full items-center">
        <button aria-label="Пуск" className="flex w-[31px] justify-center">
          <svg width="16" height="16" viewBox="0 0 16 16" fill="#45bdf2"><path d="M0 0h7.500v7.500H0zM8.500 0H16v7.500H8.500zM0 8.500h7.500V16H0zM8.500 8.500H16V16H8.500z" /></svg>
        </button>
        <label className="flex h-[22px] w-[147px] items-center gap-2 rounded-full bg-[#3b3b3b] pl-2">
          <Search size={10} strokeWidth={2.5} />
          <input aria-label="Поиск" placeholder="Поиск" className="w-24 bg-transparent text-[10px] outline-none placeholder:text-[#cfcfcf]" />
        </label>
        <div className="ml-px flex h-full w-[500px]">
          {APPS.map((app) => (
            <button key={app.name} aria-label={app.name} className={`relative my-0.5 flex flex-1 items-center justify-center rounded-sm ${app.name === 'Chrome 2' ? 'bg-[#2c2c2c]' : ''}`}>
              {app.icon}
              {app.open && <span className={`absolute -bottom-px h-[2px] rounded-full ${app.name === 'Chrome 2' ? 'w-[10px] bg-[#5cb8ee]' : 'w-1 bg-[#9a9a9a]'}`} />}
            </button>
          ))}
        </div>
      </div>
      <div className="flex items-center justify-end pr-[13px]">
        <ChevronUp size={11} strokeWidth={2.5} className="mr-3" />
        <svg width="13" height="12" viewBox="0 0 13 12" className="mr-2.5"><path d="M3 0l2 2h4l2-2 1 12H1l1-5z" fill="#ddb678" /><path d="M5 4v1M8.500 4v1" stroke="#4a3520" /></svg>
        <Mic size={11} className="mr-3 text-[#5cb4d8]" />
        <span className="mr-3 text-[8px]">ENG</span>
        <Wifi size={11} className="mr-[5px]" />
        <Volume2 size={11} className="mr-[5px]" />
        <BatteryCharging size={12} fill="#ddd" className="mr-2" />
        <span className="mr-1.5 text-right text-[8px] leading-[10px]">20:51<br />08.08.2026</span>
        <Bell size={10} />
      </div>
    </footer>
  );
}

/* ---------- QR card ---------- */
const N = 37;
const isFree = (r: number, c: number) =>
  !((r < 9 && c < 9) || (r < 9 && c > N - 10) || (r > N - 10 && c < 9) || (Math.abs(r - 18) < 6 && Math.abs(c - 18) < 6));
const QR_DOTS = Array.from({ length: N * N }, (_, i) => [Math.floor(i / N), i % N])
  .filter(([r, c]) => isFree(r, c) && noise(r * 41 + c * 7.3) > 0.5);

function QrCard() {
  return (
    <div className="absolute right-[13px] top-[13px] z-20 rounded-xl border-[6px] border-[#fb7f05] bg-white p-[14px]">
      <svg width="100" height="100" viewBox="0 0 37 37">
        <g fill="#e88a2a">
          {QR_DOTS.map(([r, c]) => <circle key={`${r}-${c}`} cx={c + 0.5} cy={r + 0.5} r="0.42" />)}
        </g>
        {[[0, 0], [29.3, 0], [0, 29.3]].map(([x, y]) => (
          <g key={`${x}-${y}`}>
            <rect x={x + 0.5} y={y + 0.5} width="6.700" height="6.700" rx="0.600" fill="none" stroke="#f38a1d" strokeWidth="1" />
            <circle cx={x + 3.8} cy={y + 3.8} r="1.800" fill="#f07a10" />
          </g>
        ))}
        <g>
          <path d="M12.500 13.500l4 2.500h4l4-2.500-.5 6-1 2-4.500 2.500-4.500-2.500-1-2z" fill="#dd7d27" />
          <path d="M12.500 13.500l4 2.500-3 2.500zM24.500 13.500l-4 2.500 3 2.500z" fill="#a8431c" />
          <path d="M16.500 16h4l-2 4z" fill="#f2b25a" />
          <path d="M15 21l3.500-2 3.500 2-3.500 3z" fill="#f3c88b" />
          <path d="M13.500 17.500h10v1c-.5 2-3.500 2-4.500-.2h-1c-1 2.200-4 2.200-4.500.2z" fill="#17130f" />
          <path d="M18 20.500h1l-.5.800z" fill="#222" />
        </g>
      </svg>
    </div>
  );
}

export default function App() {
  return (
    <div className="relative flex h-screen flex-col overflow-hidden bg-black font-['Roboto','Noto_Sans',sans-serif]">
      <BrowserTabs />
      <BrowserBars />
      <ChartHeader />
      <div className="flex min-h-0 flex-1">
        <LeftTools />
        <ChartArea />
        <RightTools />
      </div>
      <Taskbar />
      <QrCard />
    </div>
  );
}
